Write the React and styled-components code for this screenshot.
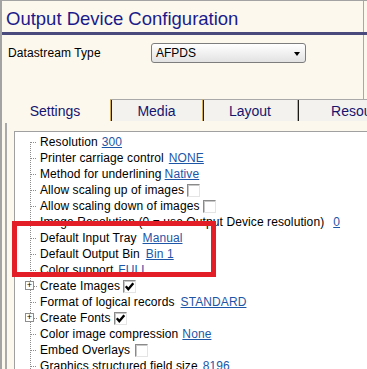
import React from "react";
import styled, { createGlobalStyle } from "styled-components";

const GlobalStyle = createGlobalStyle`
  html, body {
    margin: 0;
    padding: 0;
    background: #fcf8ee;
  }
  body {
    font-family: "Liberation Sans", Arial, sans-serif;
    font-size: 12px;
    color: #000;
  }
`;

const rows = [
  { label: "Resolution", link: "300", gap: 4 },
  { label: "Printer carriage control", link: "NONE", gap: 5 },
  { label: "Method for underlining", link: "Native", gap: 3 },
  { label: "Allow scaling up of images", check: false },
  { label: "Allow scaling down of images", check: false },
  { label: "Image Resolution (0 = use Output Device resolution)", link: "0", gap: 9 },
  { label: "Default Input Tray", link: "Manual", gap: 6 },
  { label: "Default Output Bin", link: "Bin 1", gap: 6 },
  { label: "Color support", link: "FULL", gap: 5 },
  { label: "Create Images", check: true, expand: true },
  { label: "Format of logical records", link: "STANDARD", gap: 6 },
  { label: "Create Fonts", check: true, expand: true },
  { label: "Color image compression", link: "None", gap: 4 },
  { label: "Embed Overlays", check: false, gap: 5 },
  { label: "Graphics structured field size", link: "8196", gap: 5 },
];

const tabs = [
  { label: "Settings", width: 108, active: true },
  { label: "Media", width: 92 },
  { label: "Layout", width: 95 },
  { label: "Resources", width: 134 },
];

function Checkbox({ checked }) {
  return (
    <Box>
      {checked && (
        <svg width="11" height="11" viewBox="0 0 11 11">
          <path d="M1.8 5.3 L4.3 8.2 L9.3 2.3" fill="none" stroke="#000" strokeWidth="2.4" />
        </svg>
      )}
    </Box>
  );
}

function TreeRow({ row, first }) {
  return (
    <Row>
      <Gutter first={first} expand={row.expand}>
        {row.expand && <Expander>+</Expander>}
      </Gutter>
      <Label>{row.label}</Label>
      {row.link && <Link style={{ marginLeft: row.gap }}>{row.link}</Link>}
      {row.check !== undefined && (
        <CheckWrap gap={row.gap || 3}>
          <Checkbox checked={row.check} />
        </CheckWrap>
      )}
    </Row>
  );
}

export default function App() {
  return (
    <Window>
      <GlobalStyle />
      <Header>
        <Title>Output Device Configuration</Title>
        <Rule />
        <FieldRow>
          <FieldLabel>Datastream Type</FieldLabel>
          <Select>
            <span>AFPDS</span>
            <Arrow />
          </Select>
        </FieldRow>
      </Header>
      <TabStrip>
        {tabs.map((t, i) => (
          <Tab key={t.label} active={t.active} first={i === 0} w={t.width}>
            {t.label}
          </Tab>
        ))}
      </TabStrip>
      <Body>
        <Panel>
          {rows.map((r, i) => (
            <TreeRow key={r.label} row={r} first={i === 0} />
          ))}
        </Panel>
      </Body>
      <Highlight />
    </Window>
  );
}

const Window = styled.div`
  position: relative;
  width: 365px;
  height: 368px;
  overflow: hidden;
  border-left: 2px solid #a3a3a3;
  border-top: 1px solid #a3a3a3;
`;

const Header = styled.div`
  width: 361px;
  height: 98px;
  border-right: 1px solid #a8a8a8;
`;

const Title = styled.div`
  height: 24px;
  padding: 7px 0 0 4px;
  font-size: 18.5px;
  line-height: 22px;
  color: #1b1b8c;
  white-space: nowrap;
`;

const Rule = styled.div`
  width: 365px;
  height: 3px;
  background: #4b4a7c;
`;

const FieldRow = styled.div`
  display: flex;
  align-items: center;
  margin-top: 8px;
  padding-left: 6px;
`;

const FieldLabel = styled.div`
  width: 143px;
  font-size: 12px;
  letter-spacing: 0.1px;
`;

const Select = styled.div`
  position: relative;
  box-sizing: border-box;
  width: 155px;
  height: 20px;
  padding-left: 4px;
  display: flex;
  align-items: center;
  border: 1px solid #7d7d7d;
  border-radius: 3px;
  background: linear-gradient(#ffffff, #f1f1f1 50%, #e2e2e2);
  font-size: 12px;
`;

const Arrow = styled.span`
  position: absolute;
  right: 5px;
  top: 8px;
  border-left: 3.5px solid transparent;
  border-right: 3.5px solid transparent;
  border-top: 4px solid #000;
`;

const TabStrip = styled.div`
  display: flex;
  height: 22px;
  white-space: nowrap;
`;

const Tab = styled.div`
  flex: 0 0 ${(p) => p.w}px;
  box-sizing: border-box;
  display: flex;
  align-items: center;
  justify-content: center;
  padding-top: 1px;
  font-size: 14px;
  color: #15156e;
  background: ${(p) => (p.active ? "transparent" : "#f3f2ef")};
  border-top: 1px solid ${(p) => (p.active ? "transparent" : "#a9a9a9")};
  border-left: ${(p) => (p.first ? "none" : "1px solid #d2ae52")};
  box-shadow: ${(p) => (p.first ? "none" : "inset 1px 0 0 #1c1a14")};
  ${(p) => p.first && "padding-right: 2px;"}
`;

const Body = styled.div`
  margin: 2px 0 0 3px;
  padding: 8px 0 0 7px;
  border-left: 2px solid #a9a9a9;
  height: 300px;
`;

const Panel = styled.div`
  height: 100%;
  padding-top: 2px;
  background: #fff;
  border-top: 1px solid #a0a0a0;
  border-left: 1px solid #a0a0a0;
`;

const Row = styled.div`
  display: flex;
  align-items: center;
  height: 16px;
  white-space: nowrap;
  letter-spacing: 0.1px;
`;

const Gutter = styled.div`
  position: relative;
  flex: 0 0 25px;
  align-self: stretch;
  &::before {
    content: "";
    position: absolute;
    left: 15px;
    width: 1px;
    top: ${(p) => (p.first ? "8px" : "0")};
    bottom: 0;
    background: repeating-linear-gradient(to bottom, #8c8c8c 0 1px, transparent 1px 2px);
  }
  &::after {
    content: "";
    position: absolute;
    left: ${(p) => (p.expand ? "19px" : "16px")};
    right: 3px;
    top: 8px;
    height: 1px;
    background: repeating-linear-gradient(to right, #8c8c8c 0 1px, transparent 1px 2px);
  }
`;

const Expander = styled.div`
  position: absolute;
  z-index: 1;
  left: 10px;
  top: 3px;
  box-sizing: border-box;
  width: 9px;
  height: 9px;
  border: 1px solid #8e8e8e;
  background: #fff;
  font-size: 9px;
  line-height: 6px;
  text-align: center;
  color: #000;
  letter-spacing: 0;
`;

const Label = styled.span`
  font-size: 12px;
`;

const Link = styled.span`
  font-size: 12px;
  color: #1d56a6;
  text-decoration: underline;
`;

const CheckWrap = styled.span`
  display: flex;
  margin-left: ${(p) => p.gap}px;
`;

const Box = styled.span`
  box-sizing: border-box;
  display: flex;
  align-items: center;
  justify-content: center;
  width: 13px;
  height: 13px;
  background: #fff;
  border: 1px solid;
  border-color: #8a8a8a #e4e4e4 #e4e4e4 #8a8a8a;
  box-shadow: inset 1px 1px 0 #c8c8c8;
`;

const Highlight = styled.div`
  position: absolute;
  left: 10px;
  top: 220px;
  width: 204px;
  height: 56px;
  box-sizing: border-box;
  border: 5px solid #e41e27;
  pointer-events: none;
`;
